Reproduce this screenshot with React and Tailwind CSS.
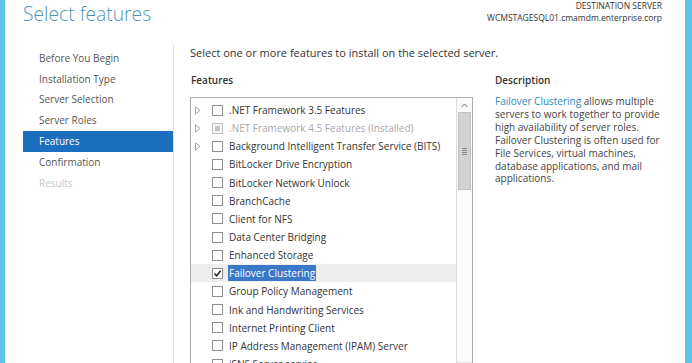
import React from "react";

const rows = [
  { label: ".NET Framework 3.5 Features", expand: true },
  { label: ".NET Framework 4.5 Features (Installed)", expand: true, installed: true },
  { label: "Background Intelligent Transfer Service (BITS)", expand: true },
  { label: "BitLocker Drive Encryption" },
  { label: "BitLocker Network Unlock" },
  { label: "BranchCache" },
  { label: "Client for NFS" },
  { label: "Data Center Bridging" },
  { label: "Enhanced Storage" },
  { label: "Failover Clustering", checked: true, selected: true },
  { label: "Group Policy Management" },
  { label: "Ink and Handwriting Services" },
  { label: "Internet Printing Client" },
  { label: "IP Address Management (IPAM) Server" },
  { label: "iSNS Server service" },
];

function Row({ label, expand, installed, checked, selected }) {
  return (
    <div className={`flex items-center h-[18.15px] pl-[4px] ${selected ? "bg-[#ededed]" : ""}`}>
      <div className="w-[17px] flex items-center">
        {expand && (
          <svg width="6" height="9" viewBox="0 0 6 9">
            <path d="M0.5 0.8 L5 4.5 L0.5 8.2 Z" fill="none" stroke="#a6a6a6" strokeWidth="1" />
          </svg>
        )}
      </div>
      <div
        className={`w-[11px] h-[11px] border flex items-center justify-center shrink-0 ${
          installed ? "border-[#c4c4c4] bg-[#f4f4f4]" : "border-[#8e8e8e] bg-white"
        }`}
      >
        {installed && <div className="w-[5px] h-[5px] bg-[#c4c4c4]" />}
        {checked && (
          <svg width="9" height="9" viewBox="0 0 9 9">
            <path d="M1.5 4.6 L3.6 6.8 L7.6 1.8" fill="none" stroke="#222" strokeWidth="1.5" />
          </svg>
        )}
      </div>
      <span
        className={`ml-[5px] px-[1px] leading-[16px] whitespace-nowrap ${
          selected ? "bg-[#3b78c8] text-white" : installed ? "text-[#a9a9a9]" : "text-[#333]"
        }`}
      >
        {label}
      </span>
    </div>
  );
}

const nav = [
  "Before You Begin",
  "Installation Type",
  "Server Selection",
  "Server Roles",
  "Features",
  "Confirmation",
  "Results",
];

export default function App() {
  return (
    <div
      className="w-[692px] h-[363px] flex overflow-hidden bg-white"
      style={{ fontFamily: '"Open Sans", "Noto Sans", sans-serif' }}
    >
      <div className="w-[5px] bg-[#5cc6ea] shrink-0" />
      <div className="flex-1 flex flex-col min-w-0">
        <div className="h-[45px] flex justify-between shrink-0">
          <div className="pl-[18px] pt-[0px] text-[19.3px] font-light leading-[28px] text-[#4f93b8]">
            Select features
          </div>
          <div className="pr-[23px] pt-[0px] text-right text-[8.5px] leading-[11.5px] text-[#333]">
            <div>DESTINATION SERVER</div>
            <div>WCMSTAGESQL01.cmamdm.enterprise.corp</div>
          </div>
        </div>
        <div className="flex flex-1 min-h-0">
          <div className="w-[168px] pl-[18px] pt-[3px] shrink-0">
            {nav.map((n) => (
              <div
                key={n}
                className={`h-[20.8px] pl-[16px] flex items-center text-[10px] ${
                  n === "Features"
                    ? "bg-[#1b6fbe] text-white"
                    : n === "Results"
                    ? "text-[#c9c9c9]"
                    : "text-[#555]"
                }`}
              >
                {n}
              </div>
            ))}
          </div>
          <div className="w-px bg-[#e3e3e3] shrink-0" />
          <div className="flex-1 pl-[16px] pt-[0px] flex flex-col min-w-0">
            <div className="text-[11px] leading-[15px] text-[#333]">
              Select one or more features to install on the selected server.
            </div>
            <div className="flex mt-[13px]">
              <div className="w-[283px] shrink-0 flex flex-col">
                <div className="text-[10px] font-semibold leading-[14px] text-[#333] pl-[1px]">Features</div>
                <div className="mt-[10px] h-[280px] border border-[#acacac] flex">
                  <div className="flex-1 pt-[3px] min-w-0 overflow-hidden text-[10px]">
                    {rows.map((r) => (
                      <Row key={r.label} {...r} />
                    ))}
                  </div>
                  <div className="w-[16px] border-l border-[#dcdcdc] bg-[#fafafa] flex flex-col">
                    <div className="h-[14px] flex items-center justify-center">
                      <svg width="7" height="5" viewBox="0 0 7 5">
                        <path d="M0.5 4 L3.5 1 L6.5 4" fill="none" stroke="#777" strokeWidth="1" />
                      </svg>
                    </div>
                    <div className="mx-[1px] h-[78px] bg-[#d2d2d2] border border-[#c2c2c2] flex items-center justify-center">
                      <div className="flex flex-col gap-[1px]">
                        <div className="w-[5px] h-px bg-[#8a8a8a]" />
                        <div className="w-[5px] h-px bg-[#8a8a8a]" />
                        <div className="w-[5px] h-px bg-[#8a8a8a]" />
                        <div className="w-[5px] h-px bg-[#8a8a8a]" />
                      </div>
                    </div>
                    <div className="flex-1" />
                    <div className="h-[14px] flex items-start pt-[3px] justify-center border-t border-[#e6e6e6]">
                      <svg width="7" height="5" viewBox="0 0 7 5">
                        <path d="M0.5 1 L3.5 4 L6.5 1" fill="none" stroke="#777" strokeWidth="1" />
                      </svg>
                    </div>
                  </div>
                </div>
              </div>
              <div className="ml-[22px] w-[185px] flex flex-col">
                <div className="text-[10px] font-semibold leading-[14px] text-[#333]">Description</div>
                <div className="mt-[8px] text-[10px] leading-[12.9px] text-[#444] whitespace-nowrap">
                  <span className="text-[#2a8ab8]">Failover Clustering</span> allows multiple
                  <br />
                  servers to work together to provide
                  <br />
                  high availability of server roles.
                  <br />
                  Failover Clustering is often used for
                  <br />
                  File Services, virtual machines,
                  <br />
                  database applications, and mail
                  <br />
                  applications.
                </div>
              </div>
            </div>
          </div>
        </div>
      </div>
      <div className="w-[7px] bg-[#5cc6ea] shrink-0" />
    </div>
  );
}
